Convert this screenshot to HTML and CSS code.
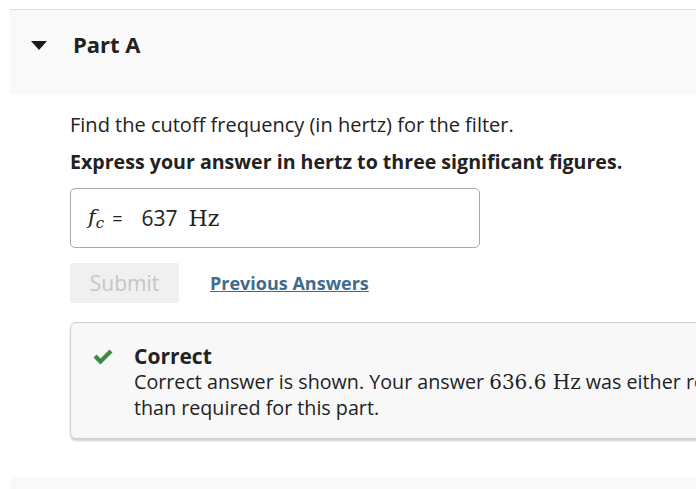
FILE: index.html
```html
<!DOCTYPE html>
<html>
<head>
<meta charset="utf-8">
<link rel="stylesheet" href="styles.css">
</head>
<body>
<div class="part">
  <div class="part-header">
    <span class="caret"></span>
    <h2 class="part-title">Part A</h2>
  </div>
  <div class="part-body">
    <p class="prompt">Find the cutoff frequency (in hertz) for the filter.</p>
    <p class="instr">Express your answer in hertz to three significant figures.</p>
    <div class="answer-box">
      <span class="math"><i>f</i><sub><i>c</i></sub></span>
      <span class="eq">=</span>
      <span class="val">637</span>
      <span class="math unit">Hz</span>
    </div>
    <div class="actions">
      <button class="submit" disabled>Submit</button>
      <a class="prev" href="#">Previous Answers</a>
    </div>
    <div class="feedback">
      <svg class="check" width="22" height="18" viewBox="0 0 22 18"><path d="M1.5 9.5 L4.5 6.5 L8.5 10.5 L17.5 1.5 L20.5 4.5 L8.5 16.5 Z" fill="#3e8a42"/></svg>
      <div class="fb-text">
        <div class="fb-title">Correct</div>
        <div class="fb-msg">Correct answer is shown. Your answer <span class="math">636.6 Hz</span> was either rounded differently or used a different number of significant figures<br>than required for this part.</div>
      </div>
    </div>
  </div>
  <div class="next-band"></div>
</div>
</body>
</html>
```
FILE: styles.css
```css
html, body {
  margin: 0;
  padding: 0;
  background: #fff;
}
body {
  font-family: "Open Sans", "Noto Sans", sans-serif;
  color: #222;
  width: 696px;
  height: 489px;
  overflow: hidden;
}
.part {
  margin-top: 9px;
  margin-left: 10px;
  border-top: 1px solid #dcdcdc;
  width: 686px;
  height: 479px;
  overflow: hidden;
}
.part-header {
  background: #f9f9f9;
  height: 84px;
  display: flex;
  align-items: flex-start;
  padding-left: 21px;
  box-sizing: border-box;
  padding-top: 31px;
}
.caret {
  width: 0;
  height: 0;
  border-left: 8px solid transparent;
  border-right: 8px solid transparent;
  border-top: 9px solid #1a1a1a;
  margin-right: 26px;
  margin-top: 0px;
}
.part-title {
  margin: 0;
  margin-top: -12px;
  font-size: 22px;
  line-height: 30px;
  font-weight: 700;
  color: #222;
}
.part-body {
  padding-left: 60px;
  padding-top: 18px;
}
.prompt {
  margin: 0;
  font-size: 20px;
  line-height: 26px;
  color: #222;
}
.instr {
  margin: 11px 0 0;
  font-size: 19.6px;
  line-height: 26px;
  font-weight: 700;
  color: #222;
}
.answer-box {
  margin-top: 13px;
  border: 1px solid #aaa;
  border-radius: 5px;
  display: flex;
  align-items: center;
  padding-left: 17px;
  box-sizing: border-box;
  width: 410px;
  height: 60px;
  font-size: 20px;
}
.math {
  font-family: "DejaVu Serif", "Liberation Serif", serif;
  font-size: 21px;
}
.unit {
  font-size: 22px;
}
.math sub {
  font-size: 15px;
  vertical-align: -4px;
}
.eq {
  margin-left: 8px;
  margin-right: 19px;
  font-size: 18px;
}
.val {
  margin-right: 11px;
  font-size: 21px;
}
.actions {
  margin-top: 15px;
  display: flex;
  align-items: center;
}
.submit {
  width: 109px;
  height: 40px;
  border: none;
  border-radius: 2px;
  background: #f0f0f0;
  color: #c6c6c6;
  font-family: inherit;
  font-size: 21px;
  padding: 0;
  flex: none;
}
.prev {
  margin-left: 31px;
  color: #3f6b8f;
  font-weight: 700;
  font-size: 18px;
  text-decoration: underline;
}
.feedback {
  margin-top: 19px;
  border: 1px solid #cfcfcf;
  border-radius: 6px;
  background: #f8f8f8;
  box-shadow: 0 2px 2px rgba(0,0,0,0.18);
  display: flex;
  padding: 20px 0 20px 21px;
  height: 117px;
  box-sizing: border-box;
  width: 800px;
}
.check {
  margin-top: 5px;
  margin-right: 20px;
  flex: none;
}
.fb-text {
  white-space: nowrap;
}
.fb-title {
  font-weight: 700;
  font-size: 21px;
  line-height: 26px;
}
.fb-msg {
  font-size: 19.7px;
  line-height: 25px;
}
.fb-msg .math {
  font-size: 20px;
}
.next-band {
  margin-top: 38px;
  height: 40px;
  background: #f9f9f9;
}
```
